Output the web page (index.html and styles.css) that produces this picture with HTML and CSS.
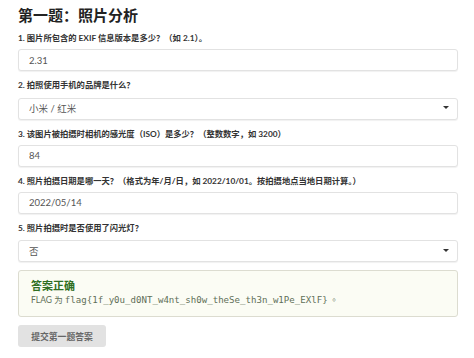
FILE: index.html
```html
<!DOCTYPE html>
<html lang="zh-CN">
<head>
    <meta charset="UTF-8">
    <meta name="viewport" content="width=device-width, initial-scale=1.0">
    <title>第一题：照片分析</title>
    <link rel="stylesheet" href="styles.css">
</head>
<body>
    <div class="container">
        <h1>第一题：照片分析</h1>

        <form id="questionForm">
            <div class="field">
                <label for="q1">1. 图片所包含的 EXIF 信息版本是多少？（如 2.1）。</label>
                <input type="text" id="q1" value="2.31">
            </div>

            <div class="field">
                <label for="q2">2. 拍照使用手机的品牌是什么？</label>
                <div class="select-wrap">
                    <select id="q2">
                        <option>小米 / 红米</option>
                        <option>华为</option>
                        <option>苹果</option>
                    </select>
                </div>
            </div>

            <div class="field">
                <label for="q3">3. 该图片被拍摄时相机的感光度（ISO）是多少？（整数数字，如 3200）</label>
                <input type="text" id="q3" value="84">
            </div>

            <div class="field">
                <label for="q4">4. 照片拍摄日期是哪一天？（格式为年/月/日，如 2022/10/01。按拍摄地点当地日期计算。）</label>
                <input type="text" id="q4" value="2022/05/14">
            </div>

            <div class="field">
                <label for="q5">5. 照片拍摄时是否使用了闪光灯？</label>
                <div class="select-wrap">
                    <select id="q5">
                        <option>否</option>
                        <option>是</option>
                    </select>
                </div>
            </div>

            <div class="result">
                <div class="result-title">答案正确</div>
                <div class="result-text">FLAG 为 <code>flag{1f_y0u_d0NT_w4nt_sh0w_theSe_th3n_w1Pe_EXlF}</code> 。</div>
            </div>

            <button type="submit" class="submit-btn">提交第一题答案</button>
        </form>
    </div>
</body>
</html>
```

FILE: styles.css
```css
body {
    margin: 0;
    padding: 0;
    background-color: #fff;
    font-family: Lato, "Noto Sans CJK TC", sans-serif;
    color: #333;
}

.container {
    width: 440px;
    padding: 5px 0 0 18px;
}

h1 {
    margin: 0 0 7px 0;
    font-size: 15px;
    line-height: 20px;
    font-weight: bold;
    color: #222;
}

.field {
    display: flex;
    flex-direction: column;
    gap: 4px;
    margin-bottom: 8px;
}

label {
    font-size: 8.3px;
    line-height: 13px;
    font-weight: bold;
    color: #333;
    white-space: nowrap;
}

input,
select {
    box-sizing: border-box;
    width: 100%;
    height: 22px;
    margin: 0;
    padding: 0 10px;
    border: 1px solid #e2e2e2;
    border-radius: 3px;
    box-shadow: 0 1px 1px rgba(0, 0, 0, 0.06);
    background-color: #fff;
    font-family: Lato, "Noto Sans CJK TC", sans-serif;
    font-size: 9.5px;
    color: #555;
    outline: none;
}

select {
    appearance: none;
    -webkit-appearance: none;
}

.select-wrap {
    position: relative;
}

.select-wrap::after {
    content: "";
    position: absolute;
    right: 9px;
    top: 10px;
    border-left: 3px solid transparent;
    border-right: 3px solid transparent;
    border-top: 3px solid #333;
}

.result {
    margin-top: 3px;
    padding: 7px 12px 8px 12px;
    height: 30px;
    border: 1px solid #dcdcd0;
    border-radius: 3px;
    background-color: #fbfcf4;
}

.result-title {
    font-size: 11px;
    line-height: 15px;
    font-weight: bold;
    color: #2f6e22;
}

.result-text {
    font-size: 8.5px;
    line-height: 14px;
    color: #5f6f58;
}

.result-text code {
    font-family: "DejaVu Sans Mono", monospace;
    font-size: 9.1px;
}

.submit-btn {
    margin-top: 8px;
    width: 88px;
    height: 22px;
    padding: 0;
    border: none;
    border-radius: 3px;
    background-color: #e2e2e2;
    color: #666;
    font-family: Lato, "Noto Sans CJK TC", sans-serif;
    font-size: 8.8px;
    font-weight: bold;
    cursor: pointer;
}
```
